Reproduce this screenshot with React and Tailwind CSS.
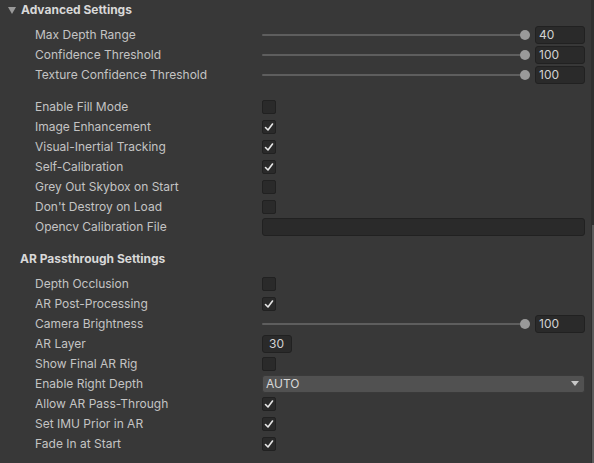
import React from "react";

const Check = () => (
    <svg width="10" height="10" viewBox="0 0 10 10" className="block">
        <polyline points="1.5,5.5 4,8 8.5,2" fill="none" stroke="#e6e6e6" strokeWidth="1.6" strokeLinecap="round" strokeLinejoin="round" />
    </svg>
);

const Checkbox = ({ checked }) => (
    <div className="w-[14px] h-[14px] rounded-[2px] bg-[#2a2a2a] border border-[#212121] flex items-center justify-center">
        {checked && <Check />}
    </div>
);

const NumField = ({ value, className = "w-[50px]" }) => (
    <div className={`${className} h-[18px] rounded-[3px] bg-[#2a2a2a] border border-[#212121] px-[3px] flex items-center text-[12px] text-[#d2d2d2]`}>
        {value}
    </div>
);

const Slider = ({ value }) => (
    <div className="flex-1 flex items-center">
        <div className="flex-1 relative h-[18px] flex items-center mr-[5px]">
            <div className="w-full h-[2px] bg-[#5e5e5e] rounded" />
            <div className="absolute right-[-5px] w-[10px] h-[10px] rounded-full bg-[#999999]" />
        </div>
        <div className="ml-[5px]">
            <NumField value={value} />
        </div>
    </div>
);

const Row = ({ label, children }) => (
    <div className="h-[20px] flex items-center">
        <div className="w-[262px] pl-[35px] text-[#c4c4c4] whitespace-nowrap">{label}</div>
        <div className="flex-1 flex items-center">{children}</div>
    </div>
);

const Dropdown = ({ value }) => (
    <div className="flex-1 h-[18px] rounded-[3px] bg-[#515151] border border-[#3a3a3a] pl-[3px] pr-[5px] flex items-center justify-between text-[#d8d8d8]">
        <span>{value}</span>
        <svg width="8" height="6" viewBox="0 0 8 6">
            <polygon points="0,0 8,0 4,5" fill="#c8c8c8" />
        </svg>
    </div>
);

export default function App() {
    return (
        <div
            className="w-[594px] h-[463px] bg-[#383838] flex overflow-hidden text-[12px]"
            style={{ fontFamily: "Inter, 'Noto Sans', sans-serif" }}
        >
            <div className="flex-1 pr-[6px] pt-[1px]">
                {/* Advanced Settings header */}
                <div className="h-[18px] flex items-center">
                    <svg width="8" height="7" viewBox="0 0 8 7" className="ml-[8px] mr-[5px]">
                        <polygon points="0,0 8,0 4,7" fill="#9a9a9a" />
                    </svg>
                    <span className="font-bold text-[#d8d8d8]">Advanced Settings</span>
                </div>

                <div className="mt-[6px]">
                    <Row label="Max Depth Range"><Slider value="40" /></Row>
                    <Row label="Confidence Threshold"><Slider value="100" /></Row>
                    <Row label="Texture Confidence Threshold"><Slider value="100" /></Row>
                </div>

                <div className="mt-[12px]">
                    <Row label="Enable Fill Mode"><Checkbox /></Row>
                    <Row label="Image Enhancement"><Checkbox checked /></Row>
                    <Row label="Visual-Inertial Tracking"><Checkbox checked /></Row>
                    <Row label="Self-Calibration"><Checkbox checked /></Row>
                    <Row label="Grey Out Skybox on Start"><Checkbox /></Row>
                    <Row label="Don't Destroy on Load"><Checkbox /></Row>
                    <Row label="Opencv Calibration File"><NumField value="" className="flex-1" /></Row>
                </div>

                {/* AR Passthrough header */}
                <div className="mt-[12px] h-[20px] flex items-center pl-[20px] font-bold text-[#d8d8d8]">
                    AR Passthrough Settings
                </div>

                <div className="mt-[5px]">
                    <Row label="Depth Occlusion"><Checkbox /></Row>
                    <Row label="AR Post-Processing"><Checkbox checked /></Row>
                    <Row label="Camera Brightness"><Slider value="100" /></Row>
                    <Row label="AR Layer"><NumField value={<span className="pl-[3px]">30</span>} className="w-[30px]" /></Row>
                    <Row label="Show Final AR Rig"><Checkbox /></Row>
                    <Row label="Enable Right Depth"><Dropdown value="AUTO" /></Row>
                    <Row label="Allow AR Pass-Through"><Checkbox checked /></Row>
                    <Row label="Set IMU Prior in AR"><Checkbox checked /></Row>
                    <Row label="Fade In at Start"><Checkbox checked /></Row>
                </div>
            </div>

            {/* scrollbar */}
            <div className="w-[3px] flex flex-col bg-[#2f2f2f]">
                <div className="h-[225px]" />
                <div className="flex-1 w-[2px] ml-[1px] bg-[#5a5a5a]" />
            </div>
        </div>
    );
}
